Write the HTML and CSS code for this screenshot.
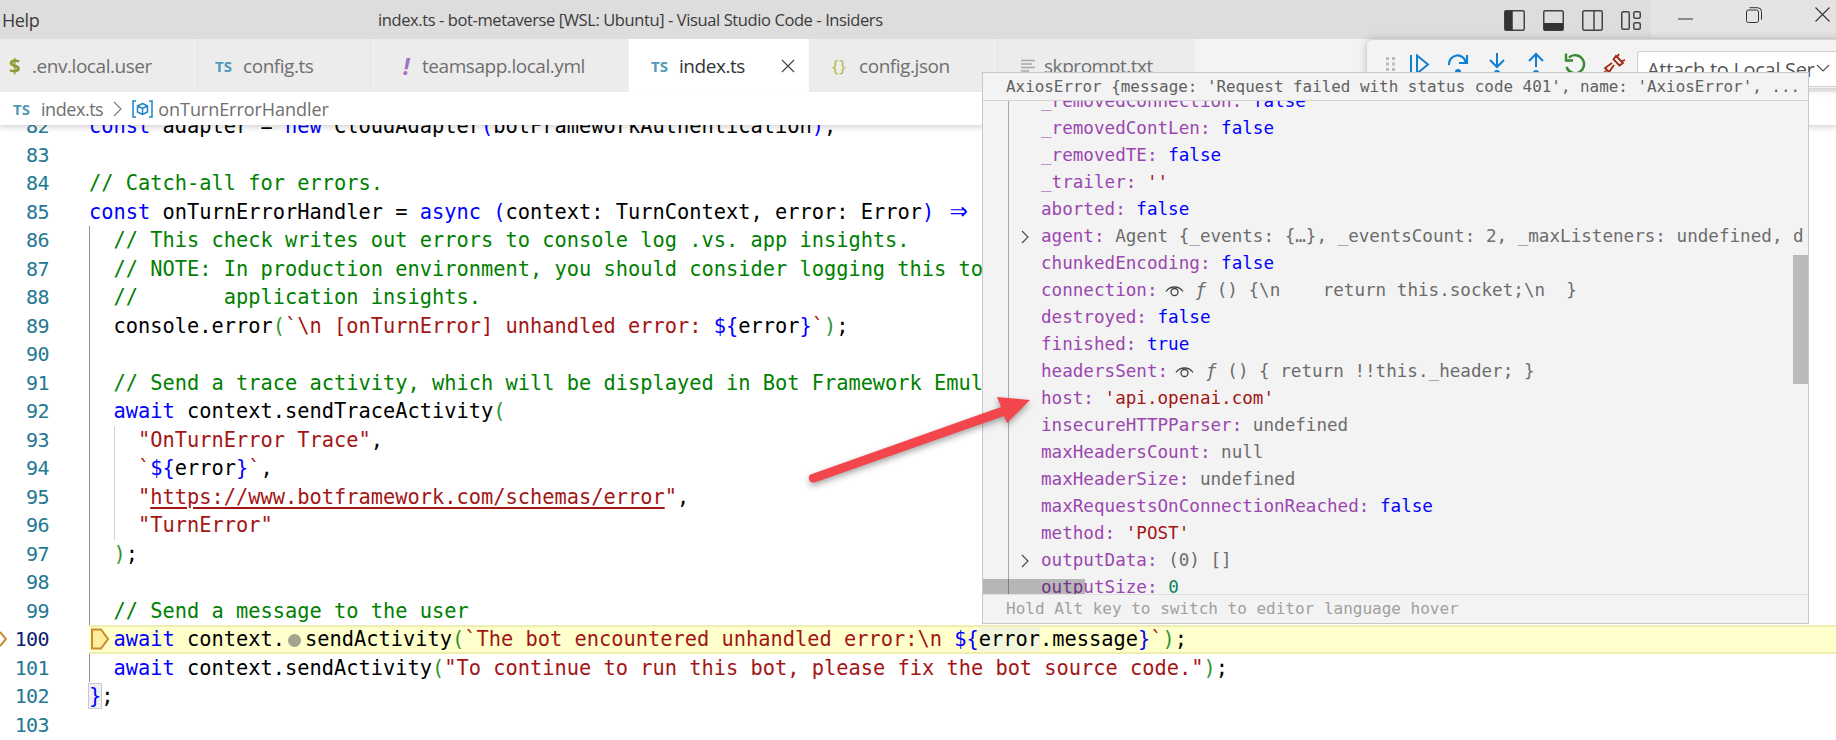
FILE: index.html
```html
<!DOCTYPE html>
<html lang="en">
<head>
	<meta charset="UTF-8">
	<title>index.ts - bot-metaverse [WSL: Ubuntu] - Visual Studio Code - Insiders</title>
	<link rel="stylesheet" href="styles.css">
</head>
<body>
	<div id="main">
		<div class="titlebar">
			<span class="menu">Help</span>
			<span class="wintitle">index.ts - bot-metaverse [WSL: Ubuntu] - Visual Studio Code - Insiders</span>
			<div class="layouts">
				<svg width="21" height="21" viewBox="0 0 21 21"><rect x="0.75" y="0.75" width="19.5" height="19.5" rx="1.5" fill="none" stroke="#444" stroke-width="1.5"/><rect x="0.75" y="0.75" width="8" height="19.5" fill="#333"/></svg>
				<svg width="21" height="21" viewBox="0 0 21 21"><rect x="0.75" y="0.75" width="19.5" height="19.5" rx="1.5" fill="none" stroke="#444" stroke-width="1.5"/><rect x="0.75" y="13" width="19.5" height="7.25" fill="#333"/></svg>
				<svg width="21" height="21" viewBox="0 0 21 21"><rect x="0.75" y="0.75" width="19.5" height="19.5" rx="1.5" fill="none" stroke="#444" stroke-width="1.5"/><path d="M12 1v19" stroke="#444" stroke-width="1.5"/></svg>
				<svg width="20" height="21" viewBox="0 0 20 21"><g fill="none" stroke="#444" stroke-width="1.5"><rect x="0.75" y="1.75" width="7.5" height="17.5" rx="1.5"/><rect x="12.75" y="1.75" width="6.5" height="6.5" rx="1.5"/><rect x="12.75" y="12.75" width="6.5" height="6.5" rx="1.5"/></g></svg>
			</div>
			<div class="winctrls">
				<svg class="w-min" width="15" height="2" viewBox="0 0 15 2"><path d="M0 1h15" stroke="#333" stroke-width="1"/></svg>
				<svg class="w-max" width="16" height="16" viewBox="0 0 16 16"><g fill="none" stroke="#333"><rect x="0.5" y="3" width="12" height="12.5" rx="2"/><path d="M3.5 0.7h8a4 4 0 0 1 4 4v8"/></g></svg>
				<svg class="w-close" width="15" height="15" viewBox="0 0 15 15"><path d="M0.5 0.5l14 14M14.5 0.5l-14 14" stroke="#333" stroke-width="1.1"/></svg>
			</div>
		</div>

		<div class="tabs">
			<div class="tab t-env"><span class="ic-env">$</span><span>.env.local.user</span></div>
			<div class="tab t-cfg"><span class="ic-ts">TS</span><span>config.ts</span></div>
			<div class="tab t-yml"><span class="ic-yml">!</span><span>teamsapp.local.yml</span></div>
			<div class="tab t-idx active"><span class="ic-ts">TS</span><span>index.ts</span><svg class="tab-x" width="14" height="14" viewBox="0 0 14 14"><path d="M1 1l12 12M13 1L1 13" stroke="#444" stroke-width="1.2"/></svg></div>
			<div class="tab t-json"><span class="ic-json">{}</span><span>config.json</span></div>
			<div class="tab t-txt"><svg class="ic-txt" width="14" height="14" viewBox="0 0 14 14"><path d="M0 1.5h14M0 5h11M0 8.500h14M0 12h8" stroke="#a8a8a8" stroke-width="1.4"/></svg><span>skprompt.txt</span></div>
		</div>

		<div class="crumbs">
			<span class="ic-ts">TS</span><span>index.ts</span>
			<svg class="crumb-sep" width="9" height="16" viewBox="0 0 9 16"><path d="M1 1l7 7-7 7" fill="none" stroke="#777" stroke-width="1.1"/></svg>
			<svg class="crumb-sym" width="21" height="18" viewBox="0 0 21 18"><g fill="none" stroke="#1a85c9" stroke-width="1.5"><path d="M4 1H1v16h3M17 1h3v16h-3"/><path d="M10.500 3.500l5 2.500v6l-5 2.500-5-2.500V6zM5.500 6l5 2.500 5-2.500M10.500 8.500v6"/></g></svg>
			<span class="crumb-name">onTurnErrorHandler</span>
		</div>

		<div class="editor">
			<div class="ln"><span class="num">82</span><code class="code"><b class="k">const</b> adapter = <b class="k">new</b> CloudAdapter<b class="k">(</b>botFrameworkAuthentication<b class="k">)</b>;</code></div>
			<div class="ln"><span class="num">83</span><code class="code"></code></div>
			<div class="ln"><span class="num">84</span><code class="code"><i class="c">// Catch-all for errors.</i></code></div>
			<div class="ln"><span class="num">85</span><code class="code"><b class="k">const</b> onTurnErrorHandler = <b class="k">async</b> <b class="k">(</b>context: TurnContext, error: Error<b class="k">)</b> <b class="k arrow">⇒</b></code></div>
			<div class="ln g1"><span class="num">86</span><code class="code">  <i class="c">// This check writes out errors to console log .vs. app insights.</i></code></div>
			<div class="ln g1"><span class="num">87</span><code class="code">  <i class="c">// NOTE: In production environment, you should consider logging this to</i></code></div>
			<div class="ln g1"><span class="num">88</span><code class="code">  <i class="c">//       application insights.</i></code></div>
			<div class="ln g1"><span class="num">89</span><code class="code">  console.error<b class="p">(</b><i class="s">`\n [onTurnError] unhandled error: </i><b class="k">${</b>error<b class="k">}</b><i class="s">`</i><b class="p">)</b>;</code></div>
			<div class="ln g1"><span class="num">90</span><code class="code"></code></div>
			<div class="ln g1"><span class="num">91</span><code class="code">  <i class="c">// Send a trace activity, which will be displayed in Bot Framework Emul</i></code></div>
			<div class="ln g1"><span class="num">92</span><code class="code">  <b class="k">await</b> context.sendTraceActivity<b class="p">(</b></code></div>
			<div class="ln g1 g2"><span class="num">93</span><code class="code">    <i class="s">"OnTurnError Trace"</i>,</code></div>
			<div class="ln g1 g2"><span class="num">94</span><code class="code">    <i class="s">`</i><b class="k">${</b>error<b class="k">}</b><i class="s">`</i>,</code></div>
			<div class="ln g1 g2"><span class="num">95</span><code class="code">    <i class="s">"<u class="link">https://www.botframework.com/schemas/error</u>"</i>,</code></div>
			<div class="ln g1 g2"><span class="num">96</span><code class="code">    <i class="s">"TurnError"</i></code></div>
			<div class="ln g1"><span class="num">97</span><code class="code">  <b class="p">)</b>;</code></div>
			<div class="ln g1"><span class="num">98</span><code class="code"></code></div>
			<div class="ln g1"><span class="num">99</span><code class="code">  <i class="c">// Send a message to the user</i></code></div>
			<div class="ln g1 current">
				<svg class="bp-mark" width="7" height="16" viewBox="0 0 7 16"><path d="M0 1l6 7-6 7" fill="none" stroke="#c98a2b" stroke-width="2"/></svg>
				<span class="num">100</span>
				<code class="code"><svg class="stack" width="20" height="22" viewBox="0 0 20 22"><path d="M2 1.500h9l7 9.500-7 9.500H2z" fill="#ffee9e" stroke="#c98a2b" stroke-width="2"/></svg>  <b class="k">await</b> context.<span class="dot"></span>sendActivity<b class="p">(</b><i class="s">`The bot encountered unhandled error:\n </i><b class="k">${</b><span class="word">error</span>.message<b class="k">}</b><i class="s">`</i><b class="p">)</b>;</code>
			</div>
			<div class="ln g1"><span class="num">101</span><code class="code">  <b class="k">await</b> context.sendActivity<b class="p">(</b><i class="s">"To continue to run this bot, please fix the bot source code."</i><b class="p">)</b>;</code></div>
			<div class="ln"><span class="num">102</span><code class="code"><b class="k match">}</b>;</code></div>
			<div class="ln"><span class="num">103</span><code class="code"></code></div>
		</div>

		<div class="debugbar">
			<svg class="grip" width="10" height="16" viewBox="0 0 10 16"><path d="M0 1h3v3H0zM6 1h3v3H6zM0 6.500h3v3H0zM6 6.500h3v3H6zM0 12h3v3H0zM6 12h3v3H6z" fill="#bbb"/></svg>
			<svg width="24" height="24" viewBox="0 0 24 24"><g fill="none" stroke="#0f7fd1" stroke-width="2"><path d="M4 3v19"/><path d="M10 3.500L21 12.500 10 21.500z"/></g></svg>
			<svg width="24" height="24" viewBox="0 0 24 24"><g fill="none" stroke="#0f7fd1" stroke-width="2.200"><path d="M3 13a8.500 8.500 0 0 1 17-2"/><path d="M21 3v8h-8"/></g><circle cx="12" cy="20" r="3" fill="#0f7fd1"/></svg>
			<svg width="24" height="24" viewBox="0 0 24 24"><g fill="none" stroke="#0f7fd1" stroke-width="2"><path d="M12 1v13"/><path d="M5 8l7 7 7-7"/></g><circle cx="12" cy="21" r="3" fill="#0f7fd1"/></svg>
			<svg width="24" height="24" viewBox="0 0 24 24"><g fill="none" stroke="#0f7fd1" stroke-width="2"><path d="M12 15V2"/><path d="M5 9l7-7 7 7"/></g><circle cx="12" cy="21" r="3" fill="#0f7fd1"/></svg>
			<svg width="24" height="24" viewBox="0 0 24 24"><g fill="none" stroke="#388a34" stroke-width="2.400"><path d="M6 5.500A9 9 0 1 1 3.500 15"/><path d="M3 1.500v7h7"/></g></svg>
			<svg width="24" height="24" viewBox="0 0 24 24"><g fill="none" stroke="#a1260d" stroke-width="1.800"><path d="M14 4l7 7-3.500 2.500-6-6zM17 2l-2 3M23 8l-3 1"/><path d="M10 11l-7 5 4 4 5-7M1 22l3-3"/></g></svg>
			<div class="attach"><span>Attach to Local Ser</span><svg class="attach-arrow" width="14" height="8" viewBox="0 0 14 8"><path d="M1 1l6 6 6-6" fill="none" stroke="#555" stroke-width="1.2"/></svg></div>
		</div>

		<div class="hover">
			<div class="hover-head">AxiosError {message: 'Request failed with status code 401', name: 'AxiosError', ...</div>
			<div class="hover-body">
				<div class="tree">
					<div class="row"><span class="n">_removedConnection:</span> <span class="b">false</span></div>
					<div class="row"><span class="n">_removedContLen:</span> <span class="b">false</span></div>
					<div class="row"><span class="n">_removedTE:</span> <span class="b">false</span></div>
					<div class="row"><span class="n">_trailer:</span> <span class="st">''</span></div>
					<div class="row"><span class="n">aborted:</span> <span class="b">false</span></div>
					<div class="row"><svg class="twist" width="8" height="14" viewBox="0 0 8 14"><path d="M1 1l6 6-6 6" fill="none" stroke="#444" stroke-width="1.100"/></svg><span class="n">agent:</span> <span class="v">Agent {_events: {…}, _eventsCount: 2, _maxListeners: undefined, d</span></div>
					<div class="row"><span class="n">chunkedEncoding:</span> <span class="b">false</span></div>
					<div class="row"><span class="n">connection:</span><svg class="eye" width="19" height="12" viewBox="0 0 19 12"><g fill="none" stroke="#444" stroke-width="1.300"><path d="M1 6.500C5 .5 14 .5 18 6.500"/><circle cx="9.500" cy="7" r="3.500"/></g></svg><span class="v"><em>ƒ</em> () {\n    return this.socket;\n  }</span></div>
					<div class="row"><span class="n">destroyed:</span> <span class="b">false</span></div>
					<div class="row"><span class="n">finished:</span> <span class="b">true</span></div>
					<div class="row"><span class="n">headersSent:</span><svg class="eye" width="19" height="12" viewBox="0 0 19 12"><g fill="none" stroke="#444" stroke-width="1.300"><path d="M1 6.500C5 .5 14 .5 18 6.500"/><circle cx="9.500" cy="7" r="3.500"/></g></svg><span class="v"><em>ƒ</em> () { return !!this._header; }</span></div>
					<div class="row"><span class="n">host:</span> <span class="st">'api.openai.com'</span></div>
					<div class="row"><span class="n">insecureHTTPParser:</span> <span class="v">undefined</span></div>
					<div class="row"><span class="n">maxHeadersCount:</span> <span class="v">null</span></div>
					<div class="row"><span class="n">maxHeaderSize:</span> <span class="v">undefined</span></div>
					<div class="row"><span class="n">maxRequestsOnConnectionReached:</span> <span class="b">false</span></div>
					<div class="row"><span class="n">method:</span> <span class="st">'POST'</span></div>
					<div class="row"><svg class="twist" width="8" height="14" viewBox="0 0 8 14"><path d="M1 1l6 6-6 6" fill="none" stroke="#444" stroke-width="1.100"/></svg><span class="n">outputData:</span> <span class="v">(0) []</span></div>
					<div class="row"><span class="n">outputSize:</span> <span class="nb">0</span></div>
				</div>
				<div class="vscroll"></div>
				<div class="hscroll"></div>
			</div>
			<div class="hover-foot">Hold Alt key to switch to editor language hover</div>
		</div>

		<svg class="callout" width="240" height="100" viewBox="800 390 240 100">
			<path d="M812 474L1001 407 997 397 1030 400 1007 423 1004 416 816 482Q810 484 809 479 808 475 812 474z" fill="#f2464c"/>
		</svg>
	</div>
</body>
</html>
```

FILE: styles.css
```css
body {
	margin: 0;
	overflow: hidden;
	background: #fff;
	font-family: "Open Sans", "Noto Sans", sans-serif;
}

#main {
	position: relative;
	width: 1836px;
	height: 740px;
	overflow: hidden;
}

/* title bar */
.titlebar {
	display: flex;
	align-items: center;
	height: 39px;
	background: #dddddd;
	color: #3b3b3b;
	font-size: 16.500px;
	letter-spacing: -0.4px;
}

.menu {
	width: 376px;
	padding-left: 2px;
	font-size: 18px;
}

.wintitle {
	width: 1124px;
}

.layouts {
	display: flex;
	gap: 18px;
	width: 149px;
	padding-top: 1px;
	box-sizing: border-box;
	padding-left: 2px;
}

.winctrls {
	display: flex;
	align-items: center;
	height: 38px;
	flex: 1;
	background: #e4e4e4;
	align-self: flex-start;
}

.winctrls svg {
	flex: none;
}

.w-min {
	margin-left: 27px;
}

.w-max {
	margin-left: 53px;
	margin-bottom: 9px;
}

.w-close {
	margin-left: 53px;
	margin-bottom: 9px;
}

/* tabs */
.tabs {
	display: flex;
	height: 53px;
	background: #f3f3f3;
}

.tab {
	display: flex;
	align-items: center;
	flex: none;
	box-sizing: border-box;
	background: #ececec;
	border-right: 1px solid #f3f3f3;
	color: #6f6f6f;
	font-size: 19px;
	letter-spacing: -0.45px;
}

.tab.active {
	background: #fff;
	color: #333;
	border-right: 0;
}

.t-env { width: 195px; padding-left: 9px; }
.t-cfg { width: 179px; padding-left: 20px; }
.t-yml { width: 255px; padding-left: 29px; }
.t-idx { width: 180px; padding-left: 22px; position: relative; }
.t-json { width: 186px; padding-left: 23px; }
.t-txt { width: 201px; padding-left: 26px; }

.ic-env {
	width: 23px;
	color: #8b9a2f;
	font-weight: bold;
	font-size: 20px;
}

.ic-ts {
	width: 28px;
	color: #519aba;
	font-weight: bold;
	font-size: 15px;
	letter-spacing: 0;
}

.ic-yml {
	width: 19px;
	color: #a074c4;
	font-weight: bold;
	font-style: italic;
	font-size: 23px;
}

.ic-json {
	width: 27px;
	color: #b5b53a;
	font-size: 17px;
	letter-spacing: 1px;
}

.ic-txt {
	margin-right: 9px;
}

.tab-x {
	margin-left: 36px;
}

/* breadcrumb */
.crumbs {
	position: relative;
	z-index: 2;
	display: flex;
	align-items: center;
	height: 33px;
	padding-left: 13px;
	background: #fff;
	box-shadow: 0 3px 5px rgba(0, 0, 0, 0.14);
	color: #6f6f6f;
	font-size: 18px;
	letter-spacing: -0.45px;
}

.crumb-sep {
	margin: 0 10px 0 10px;
}

.crumb-sym {
	margin-right: 5px;
}

.crumb-name {
	letter-spacing: -0.05px;
}

/* editor */
.editor {
	margin-top: -13px;
}

.ln {
	position: relative;
	display: flex;
	height: 28.500px;
	line-height: 28.500px;
	font-family: "DejaVu Sans Mono", "Liberation Mono", monospace;
	font-size: 20.350px;
	color: #000;
}

.num {
	flex: none;
	width: 49px;
	margin-right: 40px;
	text-align: right;
	color: #237893;
	letter-spacing: -0.6px;
	font-size: 20px;
}

.code {
	flex: 1;
	min-width: 0;
	display: block;
	font: inherit;
	white-space: pre;
}

.code b, .code i {
	font-weight: normal;
	font-style: normal;
}

.k { color: #0000ff; }
.p { color: #319331; }
.c { color: #008000; }
.s { color: #a31515; }

.arrow {
	display: inline-block;
	width: 24.500px;
	text-align: center;
	font-size: 30px;
	line-height: 20px;
	vertical-align: -1px;
}

.link {
	text-decoration: underline;
	text-decoration-thickness: 2px;
	text-underline-offset: 3px;
}

.g1 .code {
	box-shadow: inset 1px 0 #939393;
}

.g2 .code {
	background: linear-gradient(#d3d3d3, #d3d3d3) 25px 0 / 1px 100% no-repeat;
}

.current .code {
	position: relative;
	background: #ffffcc;
	box-shadow: inset 0 2px #eeeeb3, inset 0 -2px #eeeeb3;
}

.current .num {
	color: #0b216f;
}

.bp-mark {
	position: absolute;
	left: 0;
	top: 6px;
}

.stack {
	position: absolute;
	left: 1px;
	top: 3px;
}

.dot {
	display: inline-block;
	width: 13px;
	height: 13px;
	margin: 0 4px 0 3px;
	border-radius: 50%;
	background: #a3a38f;
	vertical-align: -1px;
}

.word {
	background: #f2f6dc;
}

.match {
	outline: 1px solid #c9c9c9;
	background: #f0f0f0;
}

/* debug toolbar */
.debugbar {
	position: absolute;
	top: 40px;
	left: 1367px;
	width: 480px;
	height: 48px;
	z-index: 3;
	display: flex;
	align-items: center;
	gap: 15px;
	padding-left: 19px;
	box-sizing: border-box;
	background: #f3f3f3;
	border-radius: 6px 0 0 0;
	box-shadow: 0 0 8px rgba(0, 0, 0, 0.25);
	overflow: hidden;
}

.debugbar svg {
	flex: none;
}

.grip {
	margin-right: -4px;
}

.attach {
	flex: none;
	display: flex;
	align-items: center;
	width: 230px;
	height: 36px;
	margin: 10px 0 0 -4px;
	padding-left: 9px;
	box-sizing: border-box;
	background: #fff;
	border: 1px solid #cecece;
	border-radius: 2px;
	color: #555;
	font-size: 20px;
	letter-spacing: -0.3px;
	white-space: nowrap;
	overflow: hidden;
	position: relative;
}

.attach-arrow {
	position: absolute;
	left: 178px;
	top: 12px;
}

/* debug hover */
.hover {
	position: absolute;
	top: 72px;
	left: 982px;
	width: 827px;
	height: 552px;
	z-index: 4;
	box-sizing: border-box;
	display: flex;
	flex-direction: column;
	background: #f3f3f3;
	border: 1px solid #c8c8c8;
	font-family: "DejaVu Sans Mono", "Liberation Mono", monospace;
}

.hover-head {
	flex: none;
	height: 27px;
	line-height: 27px;
	padding-left: 23px;
	border-bottom: 1px solid #d4d4d4;
	color: #616161;
	font-size: 15.900px;
	white-space: pre;
}

.hover-body {
	position: relative;
	flex: 1;
	overflow: hidden;
	min-height: 0;
}

.tree {
	margin: -13.500px 0 0 25px;
	padding-left: 32px;
	border-left: 1px solid #a8a8a8;
	font-size: 17.600px;
}

.row {
	position: relative;
	height: 27px;
	line-height: 27px;
	white-space: pre;
	color: #6c6c6c;
}

.twist {
	position: absolute;
	left: -20px;
	top: 7px;
}

.eye {
	margin: 0 12px 0 7px;
	vertical-align: -1px;
}

.n { color: #9b46b0; }
.b { color: #0000ff; }
.st { color: #a31515; }
.nb { color: #098658; }
.v { color: #6c6c6c; }

.v em {
	font-style: italic;
}

.vscroll {
	position: absolute;
	top: 154px;
	right: 0;
	width: 15px;
	height: 129px;
	background: rgba(100, 100, 100, 0.4);
}

.hscroll {
	position: absolute;
	left: 0;
	bottom: 0;
	width: 102px;
	height: 15px;
	background: rgba(0, 0, 0, 0.25);
}

.hover-foot {
	flex: none;
	height: 28px;
	line-height: 28px;
	padding-left: 23px;
	border-top: 1px solid #e0e0e0;
	color: #a0a0a0;
	font-size: 16px;
	white-space: pre;
}

/* red arrow drawn on top of the screenshot */
.callout {
	position: absolute;
	left: 800px;
	top: 390px;
	z-index: 5;
	filter: drop-shadow(0 3px 3px rgba(0, 0, 0, 0.35));
}
```
